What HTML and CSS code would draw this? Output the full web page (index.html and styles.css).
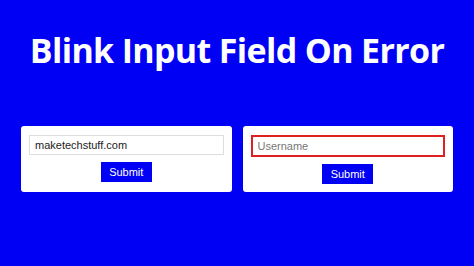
FILE: index.html
```html
<!DOCTYPE html>
<html lang="en">
<head>
    <meta charset="UTF-8">
    <meta name="viewport" content="width=device-width, initial-scale=1.0">
    <title>Blink Input Field On Error</title>
    <link rel="stylesheet" href="styles.css">
</head>
<body>
    <h1>Blink Input Field On Error</h1>

    <div class="forms">
        <form class="card">
            <input type="text" class="field" value="maketechstuff.com">
            <button type="button" class="submit">Submit</button>
        </form>

        <form class="card">
            <input type="text" class="field error" placeholder="Username">
            <button type="button" class="submit">Submit</button>
        </form>
    </div>
</body>
</html>
```

FILE: styles.css
```css
body {
    margin: 0;
    height: 266px;
    background-color: #0000f5;
    font-family: "Liberation Sans", Arial, sans-serif;
}
h1 {
    margin: 0;
    padding-top: 28px;
    text-align: center;
    color: #fff;
    font-family: "Open Sans", sans-serif;
    font-weight: bold;
    font-size: 34px;
    line-height: 44px;
    letter-spacing: -0.65px;
}
.forms {
    display: flex;
    gap: 11px;
    padding: 0 21px;
    margin-top: 54px;
}
.card {
    flex: 1;
    margin: 0;
    background-color: white;
    border-radius: 3px;
    padding: 9px 8px 8px;
    display: flex;
    flex-direction: column;
    align-items: center;
    gap: 7px;
}
.field {
    box-sizing: border-box;
    width: 100%;
    height: 20px;
    padding: 0 5px;
    border: 1px solid #ddd;
    font-family: "Liberation Sans", Arial, sans-serif;
    font-size: 11px;
    color: #222;
    outline: none;
}
.field::placeholder {
    color: #777;
}
.field.error {
    height: 22px;
    border: 2px solid #e02020;
}
.submit {
    width: 51px;
    height: 20px;
    padding: 0;
    border: none;
    background-color: #0000f5;
    color: white;
    font-family: "Liberation Sans", Arial, sans-serif;
    font-size: 11px;
}
```
